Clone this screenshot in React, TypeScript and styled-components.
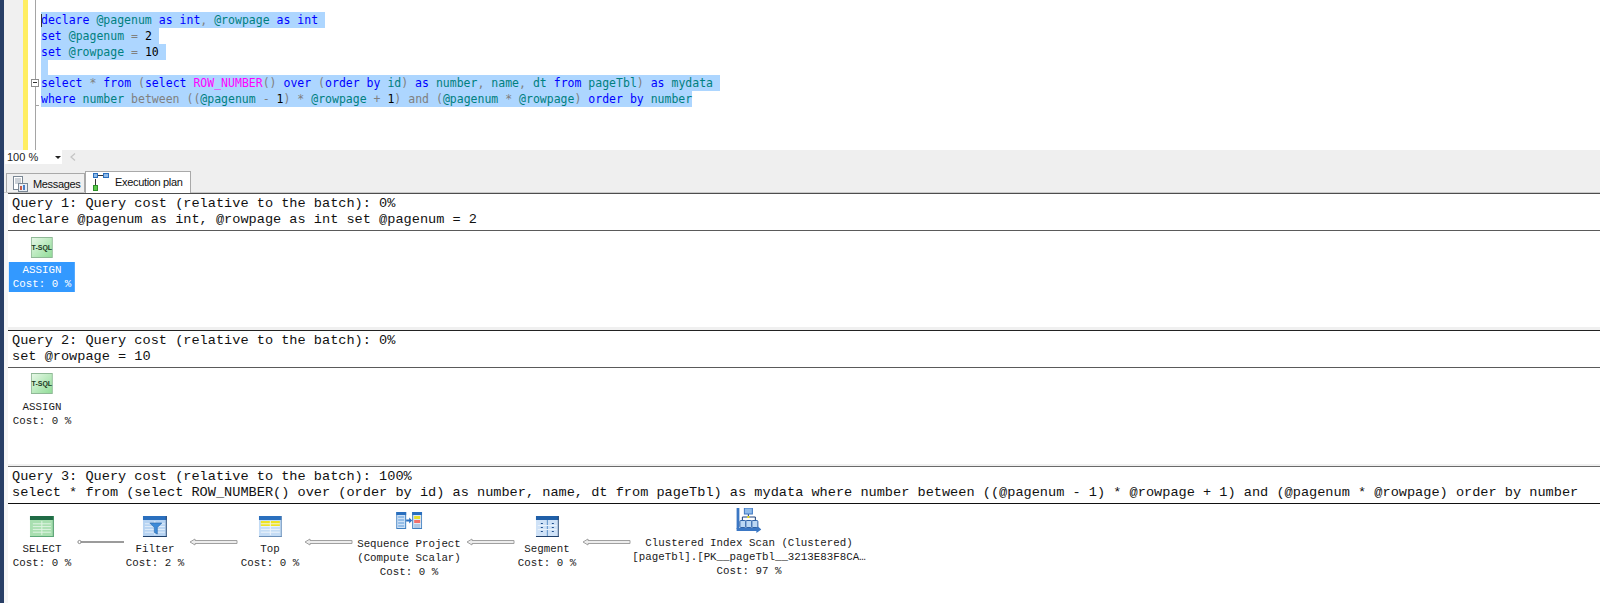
import { FC, ReactNode } from "react";
import styled, { createGlobalStyle } from "styled-components";

const GlobalStyle = createGlobalStyle`
    html, body {
        margin: 0;
        padding: 0;
        background: #ffffff;
        overflow: hidden;
    }
`;

const Page = styled.div`
    display: flex;
    width: 1600px;
    height: 603px;
    overflow: hidden;
`;

const NavyStrip = styled.div`
    width: 4px;
    flex: none;
    background-color: #293f66;
    background-image: radial-gradient(#3f5a88 0.6px, transparent 0.7px);
    background-size: 2px 2px;
`;

const Main = styled.div`
    flex: 1;
    display: flex;
    flex-direction: column;
    min-width: 0;
    background: #f2f2f2;
`;

const Editor = styled.div`
    height: 150px;
    flex: none;
    display: flex;
    background: #ffffff;
`;

const GlyphMargin = styled.div`
    width: 19px;
    flex: none;
    background: #f0f0f0;
`;

const ChangeBar = styled.div`
    width: 5px;
    flex: none;
    background: #ffee62;
`;

const OutlineMargin = styled.div`
    width: 7px;
    flex: none;
    position: relative;
    border-right: 1px solid #a5a5a5;
    margin-right: 5px;
`;

const CollapseBox = styled.div`
    position: absolute;
    left: 3px;
    top: 79px;
    width: 8px;
    height: 8px;
    background: #ffffff;
    border: 1px solid #8c8c8c;
    box-sizing: border-box;
    &::after {
        content: "";
        position: absolute;
        left: 1px;
        right: 1px;
        top: 2px;
        height: 1px;
        background: #333333;
    }
`;

const CollapseTail = styled.div`
    position: absolute;
    left: 7px;
    top: 105px;
    width: 4px;
    height: 1px;
    background: #a5a5a5;
`;

const CodeArea = styled.div`
    position: relative;
    padding-top: 12px;
    font-family: "DejaVu Sans Mono", "Liberation Mono", monospace;
    font-size: 11.5px;
    white-space: pre;
`;

const CodeLine = styled.div<{ $short?: boolean }>`
    height: ${(p) => (p.$short ? "14.5px" : "16px")};
    line-height: 16px;
`;

const Selected = styled.span`
    display: inline-block;
    height: 100%;
    background: #add6ff;
`;

const Caret = styled.div`
    position: absolute;
    left: 0;
    top: 14px;
    width: 1px;
    height: 13px;
    background: #333333;
`;

const Kw = styled.span`
    color: #0000ff;
`;
const Vr = styled.span`
    color: #008080;
`;
const Op = styled.span`
    color: #808080;
`;
const Fn = styled.span`
    color: #ff00ff;
`;
const Num = styled.span`
    color: #000000;
`;

const ZoomBar = styled.div`
    height: 23px;
    flex: none;
    display: flex;
    align-items: flex-start;
    gap: 6px;
    background: #efefef;
`;

const ZoomCombo = styled.div`
    width: 57px;
    height: 14px;
    margin-left: 1px;
    padding-left: 2px;
    box-sizing: border-box;
    display: flex;
    align-items: center;
    justify-content: space-between;
    background: #ffffff;
    font-family: "Liberation Sans", Arial, sans-serif;
    font-size: 11px;
    color: #222222;
`;

const ComboArrow = styled.span`
    width: 0;
    height: 0;
    margin-right: 1px;
    border-left: 3px solid transparent;
    border-right: 3px solid transparent;
    border-top: 3px solid #222222;
`;

const ScrollArrow = styled.svg`
    width: 8px;
    height: 14px;
    margin-left: 1px;
`;

const TabStrip = styled.div`
    height: 19px;
    flex: none;
    display: flex;
    align-items: flex-end;
    padding-left: 2px;
    background: #efefef;
    border-bottom: 1px solid #c9c9c9;
`;

const Tab = styled.div<{ $active?: boolean }>`
    box-sizing: border-box;
    height: ${(p) => (p.$active ? "22px" : "19px")};
    margin-bottom: ${(p) => (p.$active ? "-1px" : "0")};
    width: ${(p) => (p.$active ? "106px" : "79px")};
    display: flex;
    align-items: center;
    gap: ${(p) => (p.$active ? "6px" : "5px")};
    padding-left: ${(p) => (p.$active ? "7px" : "6px")};
    padding-top: ${(p) => (p.$active ? "0" : "2px")};
    padding-bottom: ${(p) => (p.$active ? "2px" : "0")};
    background: ${(p) => (p.$active ? "#ffffff" : "#f0f0f0")};
    border: 1px solid #a9a9a9;
    border-bottom: none;
    font-family: "Liberation Sans", Arial, sans-serif;
    font-size: 11px;
    letter-spacing: -0.33px;
    white-space: nowrap;
    color: #111111;
`;

const ResultsRow = styled.div`
    flex: 1;
    display: flex;
    min-height: 0;
    background: #f6f6f6;
`;

const ResultsGutter = styled.div`
    width: 4px;
    flex: none;
`;

const Results = styled.div`
    flex: 1;
    display: flex;
    flex-direction: column;
    background: #ffffff;
    min-width: 0;
`;

const QueryHeader = styled.div<{ $rule: string; $top: string }>`
    height: 34px;
    flex: none;
    padding-left: 4px;
    padding-top: 2px;
    border-top: 1px solid ${(p) => p.$top};
    border-bottom: 1px solid ${(p) => p.$rule};
    font-family: "Liberation Mono", "Courier New", monospace;
    font-size: 13.6px;
    line-height: 16px;
    color: #111111;
    white-space: pre;
    overflow: hidden;
`;

const Canvas = styled.div<{ $height: number }>`
    position: relative;
    height: ${(p) => p.$height}px;
    flex: none;
`;

const Separator = styled.div<{ $height: number }>`
    height: ${(p) => p.$height}px;
    flex: none;
    background: #f0f0f0;
`;

const Node = styled.div<{ $x: number; $y: number }>`
    position: absolute;
    left: ${(p) => p.$x}px;
    top: ${(p) => p.$y}px;
    transform: translateX(-50%);
    display: flex;
    flex-direction: column;
    align-items: center;
`;

const NodeLabel = styled.div<{ $selected?: boolean; $gap: number }>`
    margin-top: ${(p) => p.$gap}px;
    padding: 1px 4px;
    text-align: center;
    white-space: pre;
    font-family: "Liberation Mono", "Courier New", monospace;
    font-size: 10.8px;
    line-height: 14px;
    color: ${(p) => (p.$selected ? "#ffffff" : "#1a1a1a")};
    background: ${(p) => (p.$selected ? "#3399ff" : "transparent")};
`;

const ArrowSvg = styled.svg<{ $x: number }>`
    position: absolute;
    left: ${(p) => p.$x}px;
    top: 34px;
`;

const TsqlIcon: FC = () => (
    <svg width="22" height="21" viewBox="0 0 22 21">
        <defs>
            <linearGradient id="tsql" x1="0" y1="0" x2="1" y2="1">
                <stop offset="0" stopColor="#e8f8e8" />
                <stop offset="1" stopColor="#8fdc96" />
            </linearGradient>
        </defs>
        <rect x="0.5" y="0.5" width="21" height="20" fill="url(#tsql)" stroke="#8fb896" />
        <text x="11" y="13" textAnchor="middle" fontFamily="Liberation Sans, sans-serif" fontSize="7" fontWeight="700" fill="#1d3b25">
            T-SQL
        </text>
    </svg>
);

const TableGrid: FC<{ x: number; y: number; w: number; h: number; line: string; rows: number }> = ({ x, y, w, h, line, rows }) => (
    <g stroke={line} strokeWidth="1" opacity="0.9">
        {Array.from({ length: rows }).map((_, i) => (
            <line key={i} x1={x} x2={x + w} y1={y + ((i + 1) * h) / (rows + 1)} y2={y + ((i + 1) * h) / (rows + 1)} />
        ))}
        <line x1={x + w / 2} x2={x + w / 2} y1={y} y2={y + h} />
    </g>
);

const SelectIcon: FC = () => (
    <svg width="24" height="21" viewBox="0 0 24 21">
        <rect x="0" y="0" width="24" height="21" fill="#a8dfb0" />
        <rect x="0" y="0" width="24" height="4" fill="#1f6b45" />
        <rect x="23" y="0" width="1" height="21" fill="#3b8a5c" />
        <rect x="0" y="20" width="24" height="1" fill="#5ba877" />
        <TableGrid x={3} y={5} w={18} h={14} line="#e6f7e8" rows={4} />
    </svg>
);

const FilterIcon: FC = () => (
    <svg width="24" height="21" viewBox="0 0 24 21">
        <rect x="0" y="0" width="24" height="21" fill="#b6d3f2" />
        <rect x="0" y="0" width="24" height="4" fill="#2a6fbe" />
        <rect x="23" y="0" width="1" height="21" fill="#1e3f6a" />
        <rect x="0" y="20" width="24" height="1" fill="#1e3f6a" />
        <TableGrid x={2} y={5} w={20} h={14} line="#e8f2fc" rows={4} />
        <path d="M7 7H19L14.5 11.5V18L11.5 16.5V11.5Z" fill="#3d8bd8" stroke="#2a67a8" strokeWidth="0.6" />
    </svg>
);

const TopIcon: FC = () => (
    <svg width="23" height="21" viewBox="0 0 23 21">
        <rect x="0" y="0" width="23" height="21" fill="#c4dcf5" />
        <rect x="0" y="0" width="23" height="4" fill="#2a6fbe" />
        <rect x="2" y="5" width="19" height="5" fill="#efe321" />
        <rect x="22" y="0" width="1" height="21" fill="#6b8fb8" />
        <rect x="0" y="20" width="23" height="1" fill="#6b8fb8" />
        <TableGrid x={2} y={5} w={19} h={14} line="#f3f7fc" rows={4} />
    </svg>
);

const SequenceIcon: FC = () => (
    <svg width="26" height="17" viewBox="0 0 26 17">
        <rect x="0.5" y="0.5" width="9" height="16" fill="#cfe2f7" stroke="#3f7fc0" />
        <rect x="0" y="0" width="10" height="3" fill="#2a6fbe" />
        <path d="M2 5H8M2 8H8M2 11H8M2 14H8" stroke="#5b9ad8" />
        <rect x="16.5" y="0.5" width="9" height="16" fill="#dfe9f5" stroke="#3f7fc0" />
        <rect x="16" y="0" width="10" height="3" fill="#2a6fbe" />
        <rect x="18" y="4" width="6" height="3" fill="#e8de2a" />
        <rect x="18" y="8" width="6" height="3" fill="#f2706a" />
        <path d="M18 13H24M18 15H24" stroke="#7fa8d4" />
        <path d="M10 8.5H14" stroke="#2a6fbe" strokeWidth="2" />
        <path d="M13 5.5L16 8.5L13 11.5Z" fill="#2a6fbe" />
    </svg>
);

const SegmentIcon: FC = () => (
    <svg width="23" height="21" viewBox="0 0 23 21">
        <rect x="0" y="0" width="23" height="21" fill="#cfe2f7" />
        <rect x="0" y="0" width="23" height="4" fill="#1f5fa8" />
        <rect x="22" y="0" width="1" height="21" fill="#1e3f6a" />
        <rect x="0" y="20" width="23" height="1" fill="#1e3f6a" />
        <rect x="11" y="4" width="1" height="16" fill="#5b8fc8" />
        <path d="M6 7v1M6 11v1M6 15v1M17 7v1M17 11v1M17 15v1" stroke="#1f4f8c" strokeWidth="2" />
        <path d="M2 9.5H21M2 13.5H21" stroke="#e9f2fb" />
    </svg>
);

const ClusteredIcon: FC = () => (
    <svg width="25" height="25" viewBox="0 0 25 25">
        <rect x="0" y="0" width="3" height="21" fill="#3b77c4" />
        <path d="M0 20H20V17L25 21.5L20 25V23H0Z" fill="#3b77c4" />
        <path d="M12 5V9M6 13V9H19V13" fill="none" stroke="#1b3f78" />
        <rect x="8" y="0" width="8" height="6" fill="#8fbbea" stroke="#3b77c4" />
        <rect x="11" y="8" width="2" height="2" fill="#ecdc1c" />
        <rect x="3.5" y="12.5" width="6" height="7" rx="1" fill="#bcd7f3" stroke="#2f63a8" />
        <rect x="9.5" y="12.5" width="6" height="7" rx="1" fill="#bcd7f3" stroke="#2f63a8" />
        <rect x="15.5" y="12.5" width="6" height="7" rx="1" fill="#bcd7f3" stroke="#2f63a8" />
    </svg>
);

const MessagesIcon: FC = () => (
    <svg width="15" height="16" viewBox="0 0 15 16">
        <rect x="0.5" y="0.5" width="9" height="13" fill="#ffffff" stroke="#7a8794" />
        <path d="M2 3H8M2 5H8M2 7H8" stroke="#9aa5b1" />
        <rect x="5.5" y="7.5" width="9" height="8" fill="#e8eef5" stroke="#7a8794" />
        <rect x="7" y="10" width="2" height="4" fill="#c75b4a" />
        <rect x="10" y="9" width="2" height="5" fill="#4a7fc7" />
    </svg>
);

const PlanTabIcon: FC = () => (
    <svg width="16" height="18" viewBox="0 0 16 18">
        <rect x="0.5" y="0.5" width="4" height="4" fill="#8fbbea" stroke="#2a6fbe" />
        <rect x="10.5" y="0.5" width="5" height="4" fill="#8fbbea" stroke="#2a6fbe" />
        <path d="M5 2.5H10" stroke="#333333" />
        <path d="M2.5 6V12" stroke="#333333" />
        <rect x="0.5" y="12.5" width="4" height="5" fill="#5ccb4a" stroke="#2d8f2a" />
    </svg>
);

const PlanArrow: FC<{ x: number; thin?: boolean }> = ({ x, thin }) => (
    <ArrowSvg $x={x} width="49" height="8" viewBox="0 0 49 8">
        {thin ? (
            <>
                <path d="M3 4H47" stroke="#9b9b9b" strokeWidth="2" />
                <circle cx="2.5" cy="4" r="1.6" fill="#ffffff" stroke="#8a8a8a" />
            </>
        ) : (
            <path d="M1 4L6 1V2.5H48V5.5H6V7Z" fill="#ededed" stroke="#a0a0a0" />
        )}
    </ArrowSvg>
);

type PlanNodeProps = {
    x: number;
    y: number;
    icon: ReactNode;
    gap: number;
    selected?: boolean;
    lines: string[];
};

const PlanNode: FC<PlanNodeProps> = ({ x, y, icon, gap, selected, lines }) => (
    <Node $x={x} $y={y}>
        {icon}
        <NodeLabel $gap={gap} $selected={selected}>
            {lines.join("\n")}
        </NodeLabel>
    </Node>
);

const App: FC = () => (
    <Page>
        <GlobalStyle />
        <NavyStrip />
        <Main>
            <Editor>
                <GlyphMargin />
                <ChangeBar />
                <OutlineMargin>
                    <CollapseBox />
                    <CollapseTail />
                </OutlineMargin>
                <CodeArea>
                    <Caret />
                    <CodeLine>
                        <Selected>
                            <Kw>declare</Kw> <Vr>@pagenum</Vr> <Kw>as</Kw> <Kw>int</Kw>
                            <Op>,</Op> <Vr>@rowpage</Vr> <Kw>as</Kw> <Kw>int</Kw>{" "}
                        </Selected>
                    </CodeLine>
                    <CodeLine>
                        <Selected>
                            <Kw>set</Kw> <Vr>@pagenum</Vr> <Op>=</Op> <Num>2</Num>{" "}
                        </Selected>
                    </CodeLine>
                    <CodeLine>
                        <Selected>
                            <Kw>set</Kw> <Vr>@rowpage</Vr> <Op>=</Op> <Num>10</Num>{" "}
                        </Selected>
                    </CodeLine>
                    <CodeLine $short>
                        <Selected> </Selected>
                    </CodeLine>
                    <CodeLine>
                        <Selected>
                            <Kw>select</Kw> <Op>*</Op> <Kw>from</Kw> <Op>(</Op>
                            <Kw>select</Kw> <Fn>ROW_NUMBER</Fn>
                            <Op>()</Op> <Kw>over</Kw> <Op>(</Op>
                            <Kw>order by</Kw> <Vr>id</Vr>
                            <Op>)</Op> <Kw>as</Kw> <Vr>number</Vr>
                            <Op>,</Op> <Vr>name</Vr>
                            <Op>,</Op> <Vr>dt</Vr> <Kw>from</Kw> <Vr>pageTbl</Vr>
                            <Op>)</Op> <Kw>as</Kw> <Vr>mydata</Vr>{" "}
                        </Selected>
                    </CodeLine>
                    <CodeLine>
                        <Selected>
                            <Kw>where</Kw> <Vr>number</Vr> <Op>between</Op> <Op>((</Op>
                            <Vr>@pagenum</Vr> <Op>-</Op> <Num>1</Num>
                            <Op>)</Op> <Op>*</Op> <Vr>@rowpage</Vr> <Op>+</Op> <Num>1</Num>
                            <Op>)</Op> <Op>and</Op> <Op>(</Op>
                            <Vr>@pagenum</Vr> <Op>*</Op> <Vr>@rowpage</Vr>
                            <Op>)</Op> <Kw>order by</Kw> <Vr>number</Vr>
                        </Selected>
                    </CodeLine>
                </CodeArea>
            </Editor>
            <ZoomBar>
                <ZoomCombo>
                    100 %
                    <ComboArrow />
                </ZoomCombo>
                <ScrollArrow viewBox="0 0 8 14">
                    <path d="M6 3.5L2 7L6 10.5" fill="none" stroke="#c4c4c4" strokeWidth="1.2" />
                </ScrollArrow>
            </ZoomBar>
            <TabStrip>
                <Tab>
                    <MessagesIcon />
                    Messages
                </Tab>
                <Tab $active>
                    <PlanTabIcon />
                    Execution plan
                </Tab>
            </TabStrip>
            <ResultsRow>
                <ResultsGutter />
                <Results>
                    <QueryHeader $top="#4d4d4d" $rule="#5a5a5a">
                        {"Query 1: Query cost (relative to the batch): 0%\ndeclare @pagenum as int, @rowpage as int set @pagenum = 2"}
                    </QueryHeader>
                    <Canvas $height={96}>
                        <PlanNode x={34} y={6} icon={<TsqlIcon />} gap={4} selected lines={["ASSIGN", "Cost: 0 %"]} />
                    </Canvas>
                    <Separator $height={3} />
                    <QueryHeader $top="#222222" $rule="#5a5a5a">
                        {"Query 2: Query cost (relative to the batch): 0%\nset @rowpage = 10"}
                    </QueryHeader>
                    <Canvas $height={96}>
                        <PlanNode x={34} y={5} icon={<TsqlIcon />} gap={5} lines={["ASSIGN", "Cost: 0 %"]} />
                    </Canvas>
                    <Separator $height={2} />
                    <QueryHeader $top="#6a6a6a" $rule="#111111">
                        {"Query 3: Query cost (relative to the batch): 100%\nselect * from (select ROW_NUMBER() over (order by id) as number, name, dt from pageTbl) as mydata where number between ((@pagenum - 1) * @rowpage + 1) and (@pagenum * @rowpage) order by number"}
                    </QueryHeader>
                    <Canvas $height={100}>
                        <PlanNode x={34} y={12} icon={<SelectIcon />} gap={4} lines={["SELECT", "Cost: 0 %"]} />
                        <PlanArrow x={69} thin />
                        <PlanNode x={147} y={12} icon={<FilterIcon />} gap={4} lines={["Filter", "Cost: 2 %"]} />
                        <PlanArrow x={181} />
                        <PlanNode x={262} y={12} icon={<TopIcon />} gap={4} lines={["Top", "Cost: 0 %"]} />
                        <PlanArrow x={296} />
                        <PlanNode x={401} y={8} icon={<SequenceIcon />} gap={7} lines={["Sequence Project", "(Compute Scalar)", "Cost: 0 %"]} />
                        <PlanArrow x={458} />
                        <PlanNode x={539} y={12} icon={<SegmentIcon />} gap={4} lines={["Segment", "Cost: 0 %"]} />
                        <PlanArrow x={574} />
                        <PlanNode x={741} y={4} icon={<ClusteredIcon />} gap={2} lines={["Clustered Index Scan (Clustered)", "[pageTbl].[PK__pageTbl__3213E83F8CA…", "Cost: 97 %"]} />
                    </Canvas>
                </Results>
            </ResultsRow>
        </Main>
    </Page>
);

export default App;
